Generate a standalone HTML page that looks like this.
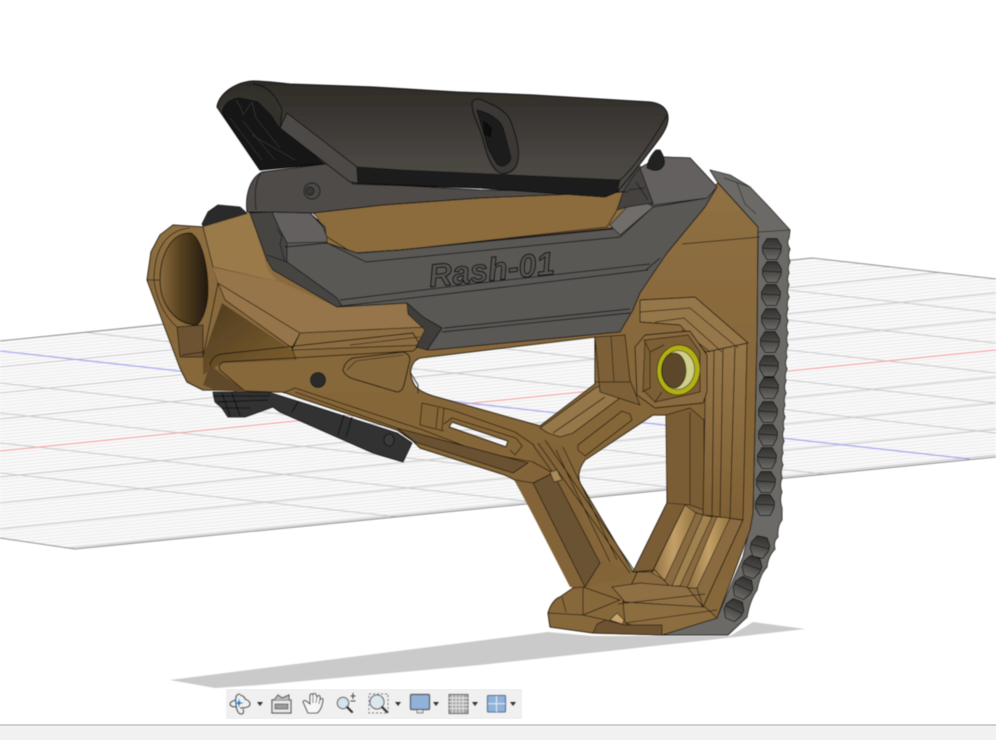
<!DOCTYPE html>
<html><head><meta charset="utf-8"><style>
html,body{margin:0;padding:0;background:#fff}
body{width:996px;height:740px;overflow:hidden;position:relative}
svg{position:absolute;left:0;top:0;display:block}
</style></head><body>
<svg width="996" height="740" viewBox="0 0 996 740" xmlns="http://www.w3.org/2000/svg">
<defs>
<pattern id="minor" width="40" height="3.2" patternUnits="userSpaceOnUse" patternTransform="rotate(-5.8)">
<rect width="40" height="3.2" fill="#fafafa"/><rect width="40" height="1" fill="#eaeaea"/>
</pattern>
<clipPath id="gc"><polygon points="0,341 812,258 996,279 996,457 75,549 0,538"/></clipPath>
<filter id="soft" x="-5%" y="-5%" width="110%" height="110%"><feGaussianBlur stdDeviation="0.5"/></filter>
<filter id="soft2" x="-5%" y="-5%" width="110%" height="110%"><feGaussianBlur stdDeviation="0.4"/></filter>
<linearGradient id="cheek" x1="0" y1="0" x2="0" y2="1"><stop offset="0" stop-color="#2e2b27"/><stop offset=".7" stop-color="#4a4641"/><stop offset="1" stop-color="#4e4a45"/></linearGradient>
<linearGradient id="tan" x1="0" y1="0" x2="0" y2="1"><stop offset="0" stop-color="#8f7043"/><stop offset=".5" stop-color="#856639"/><stop offset="1" stop-color="#86673b"/></linearGradient>
<linearGradient id="tanDark" x1="0" y1="0" x2="1" y2="1"><stop offset="0" stop-color="#4e3b20"/><stop offset="1" stop-color="#80612f"/></linearGradient>
<linearGradient id="bore" x1="0" y1="0" x2="1" y2="0"><stop offset="0" stop-color="#8a6b3e"/><stop offset=".45" stop-color="#54401f"/><stop offset="1" stop-color="#221a0e"/></linearGradient>
<linearGradient id="hexg" x1="0" y1="0" x2="0" y2="1"><stop offset="0" stop-color="#333230"/><stop offset=".5" stop-color="#4a4946"/><stop offset="1" stop-color="#6d6c68"/></linearGradient>
<linearGradient id="light" x1="0" y1="0" x2="1" y2="0"><stop offset="0" stop-color="#8d6e40"/><stop offset=".5" stop-color="#c4a068"/><stop offset="1" stop-color="#94743f"/></linearGradient>
<linearGradient id="vband" x1="0" y1="0" x2="0" y2="1"><stop offset="0" stop-color="#96774a"/><stop offset="1" stop-color="#7f6035"/></linearGradient>
<g id="hx"><path d="M-5,-10.5 L5,-10.5 L9.5,-3 L9,3 L5,10.5 L-5,10.5 L-9.5,3 L-9.5,-3 Z" fill="url(#hexg)" stroke="#141414" stroke-width=".9"/><path d="M-9.5,-1 L9.5,0" stroke="#111" stroke-width=".8"/></g>
</defs>

<!-- ground grid -->
<g filter="url(#soft2)">
<g clip-path="url(#gc)">
<rect x="0" y="250" width="996" height="310" fill="url(#minor)"/>
<g stroke="#c8c8c8" stroke-width="1" fill="none">
<path d="M0,367 L996,267M0,393 L996,293M0,419 L996,319M0,477 L996,377M0,503 L996,403M0,529 L996,429M0,555 L996,455"/>
<path d="M0,383 L996,493M0,413 L996,523M0,443 L996,553M0,473 L996,583M0,323 L996,433M0,293 L996,403M0,263 L996,373M0,233 L996,343M0,203 L996,313"/>
</g>
<path d="M0,451 L996,350" stroke="#f6a5a8" stroke-width="1.3" fill="none"/>
<path d="M0,351 L970,459" stroke="#a4a6f2" stroke-width="1.3" fill="none"/>
</g>
<path d="M0,341 L812,258 L996,279M996,457 L75,549 L0,538" stroke="#8c8c8c" stroke-width="1.1" fill="none"/>
</g>

<!-- shadow -->
<polygon points="170,680 548,632 593,636 730,636 753,622 805,629 700,641 480,665 260,685 215,688" fill="#cacaca" filter="url(#soft2)"/>

<g filter="url(#soft)" stroke-linejoin="round">
<!-- knob -->
<path d="M202,224 L208,212 L218,205 L240,207 L252,218 L205,230 Z" fill="#2b2b2b" stroke="#111" stroke-width=".8"/>

<!-- dark lever -->
<path d="M213,392 L268,392 L300,402 L397,433 L412,443 L403,462 L373,453 L280,412 L273,407 L245,417 L228,417 L222,408 L215,402 Z" fill="#303030" stroke="#111" stroke-width=".8"/>
<path d="M213,396 L270,396M217,402 L268,400M222,408 L250,408M298,402 L292,412M344,415 L338,435M352,417 L346,437M222,393 L230,416M232,393 L240,416" stroke="#0d0d0d" stroke-width=".9" fill="none"/>
<ellipse cx="389" cy="440" rx="5" ry="6" fill="#3a3a3a" stroke="#0f0f0f" stroke-width=".8"/>

<!-- butt strip -->
<path d="M710,170 L730,175 L750,187 L770,208 L790,230 L789,238 Q786,243 790,249 Q787,255 790,262 Q787,267 789,273 Q786,279 789,285 Q786,291 789,297 Q786,303 788,309 Q785,315 788,321 Q785,327 788,333 Q785,339 788,345 Q785,351 787,357 Q784,363 787,369 Q784,375 786,381 Q783,387 786,393 Q783,399 785,405 Q782,411 785,417 Q782,423 784,429 Q781,435 784,441 Q781,447 783,453 Q780,459 783,465 Q780,471 782,478 Q779,485 782,492 Q779,499 782,508 L782,520 Q777,526 778,537 Q773,541 775,549 Q768,556 767,567 Q760,574 757,590 Q750,600 747,617 L728,635 L662,635 L670,625 L717,618 L743,557 L753,513 L757,340 L758,227 L718,183 Z" fill="#6c6b66" stroke="#1e1e1c" stroke-width=".9"/>
<path d="M758,232 L790,230M724,178 L750,187M737,183 L745,204 L756,214" stroke="#2a2a28" stroke-width=".8" fill="none"/>

<!-- hexes -->
<use href="#hx" x="772" y="249"/><use href="#hx" x="772" y="272"/><use href="#hx" x="771" y="295"/><use href="#hx" x="771" y="319"/><use href="#hx" x="770" y="342"/><use href="#hx" x="769" y="366"/><use href="#hx" x="769" y="388"/><use href="#hx" x="768" y="412"/><use href="#hx" x="768" y="435"/><use href="#hx" x="767" y="458"/><use href="#hx" x="766" y="482"/><use href="#hx" x="765" y="505"/>
<g transform="translate(760,547) rotate(12)"><use href="#hx"/></g>
<g transform="translate(752,567) rotate(18)"><use href="#hx"/></g>
<g transform="translate(743,588) rotate(22)"><use href="#hx"/></g>
<g transform="translate(734,610) rotate(22)"><use href="#hx"/></g>

<!-- filler behind rail corner -->
<polygon points="590,192 640,165 660,205 610,232" fill="#4a4845"/>

<!-- main tan body with windows -->
<path fill-rule="evenodd" fill="url(#tan)" stroke="#1c150a" stroke-width="1" d="M147,280 L151,252 L160,235 L173,225 L203,227 L250,213 L268,215 L290,225 L700,200 L718,183 L758,227 L757,340 L753,513 L750,530 L717,618 L662,635 L593,633 L550,627 L548,613 Q552,600 560,597 L573,588 L515,480 L505,475 L420,448 L413,441 L397,430 L300,398 L283,392 L273,392 L213,390 L203,390 L187,382 L180,368 Z
M595,337 L595,384 L540,426 L433,396 Q420,392 415,386 Q408,374 412,366 Q414,360 420,358 Z
M668,415 L667,503 L633,572 L580,483 Q576,472 585,460 L653,415 Z
M449,427 L452,422 L508,441 L506,447 Z"/>

<!-- barrel -->
<path d="M160,280 C160,254 172,232 191,233 C203,240 208,270 208,290 C208,306 203,320 197,325 C176,325 160,305 160,280 Z" fill="url(#bore)" stroke="#1c150a" stroke-width="1"/>
<path d="M154,280 C154,250 166,230 190,228M154,280 C156,300 166,318 177,327M147,280 L160,280" stroke="#1c150a" stroke-width=".8" fill="none"/>
<path d="M177,327 L203,325 L203,357 L180,357 Z" fill="#6d5330" stroke="#1c150a" stroke-width=".8"/>
<path d="M182,355 L203,352" stroke="#1c150a" stroke-width=".7"/>
<path d="M203,227 L218,283 L203,357" stroke="#1c150a" stroke-width=".9" fill="none"/>
<path d="M203,227 L213,267 L278,282 L268,270 L250,213 Z" fill="#9a7a4a" stroke="none"/>
<path d="M213,267 L278,282 M203,227 L213,267" stroke="#1c150a" stroke-width=".8" fill="none"/>
<path d="M218,283 L300,333 L292,348 L225,300 Z" fill="#95754a" stroke="#1c150a" stroke-width=".8"/>
<path d="M222,303 L292,350 L296,360 L222,363 L203,375 L203,357 Z" fill="url(#tanDark)" stroke="none"/>
<path d="M213,267 L280,282 L337,307 L407,303 L423,317 L427,327 L300,333 L218,283 Z" fill="#95754a" stroke="none"/>
<path d="M300,333 L427,327 L425,345 L292,350 Z" fill="#8c6d42" stroke="#1c150a" stroke-width=".8"/>
<path d="M300,333 L292,348 L296,360M218,283 L300,333 M350,345 L420,337" stroke="#1c150a" stroke-width=".7" fill="none"/>

<!-- tan top recess -->
<path d="M313,213 L383,205 L480,198 L623,192 L617,210 L607,227 L400,250 L353,253 L327,237 L317,217 Z" fill="#8c6c3e" stroke="#1c150a" stroke-width=".8"/>

<!-- rear horizontal seam -->
<path d="M682,244 L760,237" stroke="#1c150a" stroke-width=".8" fill="none"/>

<!-- lower body channel -->
<path d="M210,365 C212,357 216,355 222,354 L413,333 L420,345 L413,351 L223,362 C220,364 218,366 220,370 L246,392" fill="none" stroke="#1c150a" stroke-width=".9"/>
<path d="M210,365 L222,386 L237,392" fill="none" stroke="#1c150a" stroke-width=".8"/>
<path d="M210,365 L246,392 L215,390 L203,385 Z" fill="#60492a" stroke="none"/>
<path d="M343,370 Q345,361 353,358 L403,352 Q410,354 410,360 L404,385 Q402,392 397,392 L357,380 Q345,377 343,370 Z" fill="#86683c" stroke="#1c150a" stroke-width="1"/>
<path d="M347,370 L356,361 L403,355" fill="none" stroke="#1c150a" stroke-width=".6"/>
<circle cx="318" cy="380" r="7.5" fill="#2a2a2a" stroke="#0f0f0f" stroke-width=".8"/>
<path d="M283,393 L295,388 L423,430 L480,452 L533,462 M295,392 L397,428" fill="none" stroke="#1c150a" stroke-width=".8"/>
<path d="M397,428 L528,463 L513,473 L415,442 Z" fill="#6a5130" stroke="#1c150a" stroke-width=".8"/>
<path d="M410,372 L418,385 L418,394 M422,403 L452,410 L515,432 L534,445 M422,403 L420,425 L444,431 M438,408 L436,428 M444,408 L442,430" fill="none" stroke="#1c150a" stroke-width=".8"/>
<path d="M444,424 L452,418 L516,438 L522,446 L515,455 L510,450" fill="none" stroke="#1c150a" stroke-width=".8"/>

<!-- strut Y + leg -->
<path d="M534,445 L545,440 L563,447 L595,555 L630,573 L615,580 L583,587 L570,587 L515,480 L533,462 Z" fill="#836439" stroke="none"/>
<path d="M533,483 L553,473 L600,563 L585,587 Z" fill="#6b5230" stroke="#1c150a" stroke-width=".8"/>
<path d="M515,480 L533,483 L553,473 L533,462 M553,473 L533,445 M538,443 L630,573 M545,440 L636,573 M563,447 L617,560 M556,450 L610,562" fill="none" stroke="#1c150a" stroke-width=".8"/>
<path d="M550,472 L557,470 L562,480 L554,482 Z" fill="#a98a58" stroke="#1c150a" stroke-width=".7"/>
<path d="M540,428 L595,388 L620,378 L620,398 L573,433 L560,437 L548,433 Z" fill="#96774a" stroke="#1c150a" stroke-width=".8"/>
<path d="M553,433 L605,397 M578,445 L622,411 L630,414 L632,420 L585,456 L578,450 Z" fill="none" stroke="#1c150a" stroke-width=".8"/>
<path d="M595,337 L625,335 L630,380 L640,405 L600,392 Z" fill="#7d6037" stroke="#1c150a" stroke-width=".8"/>
<path d="M611,336 L614,382 M595,382 L630,382" stroke="#1c150a" stroke-width=".7" fill="none"/>
<path d="M666,415 L690,408 L704,420 L704,510 L690,505 L667,503 Z" fill="#7a5d34" stroke="#1c150a" stroke-width=".8"/>
<path d="M690,412 L690,505" stroke="#1c150a" stroke-width=".7"/>

<!-- rear bands -->
<path d="M706,352 L747,343 L743,520 L703,515 Z" fill="url(#vband)" stroke="none"/>
<path d="M640,300 L695,297 L748,343 L706,352 L680,325 L640,322 Z" fill="#96774a" stroke="#1c150a" stroke-width=".9"/>
<path d="M640,312 L690,308 L738,348 M655,322 L684,318 L722,352 M682,330 L710,352" fill="none" stroke="#1c150a" stroke-width=".8"/>
<path d="M706,352 L703,515 M714,350 L712,517 M723,349 L720,518 M735,347 L730,519 M747,343 L743,520" stroke="#1c150a" stroke-width=".85" fill="none"/>
<!-- lower facets -->
<path d="M667,503 L703,515 L743,520 L703,607 L623,602 L636,575 Z" fill="#8a6b3f" stroke="#1c150a" stroke-width=".9"/>
<path d="M717,517 L730,518 L697,588 L687,588 Z" fill="url(#light)" stroke="#1c150a" stroke-width=".7"/>
<path d="M703,515 L712,517 L680,586 L672,586 Z" fill="#a08250" stroke="#1c150a" stroke-width=".7"/>
<path d="M685,505 L696,513 L665,580 L652,573 Z" fill="url(#light)" stroke="#1c150a" stroke-width=".7"/>
<path d="M667,503 L633,572 L652,572 L685,505" fill="#7a5c34" stroke="#1c150a" stroke-width=".8"/>
<path d="M633,572 L655,570 L670,587 L687,588 L697,588 L703,607" fill="none" stroke="#1c150a" stroke-width=".8"/>
<!-- foot -->
<path d="M612,587 L640,583 L687,587 L703,607 L625,602 Z" fill="#8f7044" stroke="#1c150a" stroke-width=".8"/>
<path d="M623,602 L705,607 L717,618 L662,635 L625,623 Z" fill="#8c6d41" stroke="#1c150a" stroke-width=".8"/>
<path d="M625,623 L717,610 M618,604 L705,594" stroke="#1c150a" stroke-width=".7" fill="none"/>
<path d="M617,613 L624,620 L622,624 L610,620 Z" fill="#c9a56c" stroke="#1c150a" stroke-width=".7"/>
<path d="M593,633 L597,624 L606,620 L625,625 L662,625 L662,635 Z" fill="#6d5330" stroke="#1c150a" stroke-width=".7"/>
<path d="M573,588 L583,587 L620,600 L583,615 L548,613" fill="none" stroke="#1c150a" stroke-width=".8"/>
<path d="M583,587 L583,615 L606,620 M562,597 L566,612" fill="none" stroke="#1c150a" stroke-width=".7"/>

<!-- boss with yellow ring -->
<path d="M635,347 L645,335 L690,331 L707,355 L707,392 L703,403 L655,408 L637,395 Z" fill="#8a6b3f" stroke="#1c150a" stroke-width=".9"/>
<path d="M645,340 L688,335 L700,352 L700,392 L655,402 L643,390 Z" fill="#7c5e36" stroke="#1c150a" stroke-width=".7"/>
<path d="M644,340 L650,352 L650,388 L642,392 M650,352 L664,345 M655,402 L662,392" fill="none" stroke="#1c150a" stroke-width=".7"/>
<ellipse cx="678.500" cy="370" rx="21.500" ry="25" transform="rotate(6 678.500 370)" fill="#b3b013" stroke="#4a4a05" stroke-width="1"/>
<ellipse cx="678" cy="370" rx="16.500" ry="19.500" transform="rotate(6 678 370)" fill="#cfcf8a" stroke="#4a4a05" stroke-width=".8"/>
<path d="M674,353 C666,353 662,362 662,371 C662,381 668,388 676,388 C681,386 686,380 686,371 C686,362 682,353 674,353 Z" fill="#5b472a" stroke="#2a2208" stroke-width=".7"/>

<!-- grey rail -->
<path d="M270,212 L310,213 L325,227 L327,243 L357,253 L400,250 L613,228 L653,203 L640,168 L660,157 L690,158 L717,187 L705,207 L667,253 L640,293 L633,310 L620,332 L432,350 L427,350 L442,328 L423,317 L407,303 L337,307 L273,270 L267,260 L250,213 Z" fill="#5a5855" stroke="#17171a" stroke-width="1"/>
<path d="M272,212 L310,213 L323,227 L327,237 L327,242 L287,243 L280,230 Z" fill="#63615e" stroke="#17171a" stroke-width=".8"/>
<path d="M250,213 L272,212 L280,230 L287,243 L287,262 L337,298 L342,306 L337,307 L273,270 L267,260 Z" fill="#474543" stroke="#17171a" stroke-width=".8"/>
<path d="M277,229 L282,236 L280,244 L285,262 M267,255 L287,262" fill="none" stroke="#17171a" stroke-width=".7"/>
<path d="M285,247 L327,243 L366,262 L620,237 L653,207 L707,198 M357,253 L400,250 L613,229" fill="none" stroke="#17171a" stroke-width=".9"/>
<path d="M610,225 L627,207 L647,203 L653,207 L620,235 Z" fill="#6f6d6a" stroke="#17171a" stroke-width=".7"/>
<path d="M640,168 L660,157 L690,158 L717,187 L707,198 L653,205 Z" fill="#63615e" stroke="#17171a" stroke-width=".8"/>
<path d="M623,192 L632,178 L640,168 L653,203 L627,207 L617,210 Z" fill="#44423f" stroke="#17171a" stroke-width=".8"/>
<path d="M628,190 L645,188 M636,182 L648,200" stroke="#17171a" stroke-width=".7" fill="none"/>
<path d="M340,300 L480,283 L650,264 M342,306 L480,290 L648,270 M442,332 L630,313 M444,328 L630,309 M646,270 L660,258" fill="none" stroke="#17171a" stroke-width=".9"/>
<path d="M407,303 L423,317 L442,328 L427,350 L416,347 L425,330 L408,314 Z" fill="#3f3d3b" stroke="#17171a" stroke-width=".8"/>

<text x="430" y="287" transform="rotate(-6 430 287)" font-family="'Liberation Sans',sans-serif" font-size="32" font-weight="700" font-style="italic" textLength="126" lengthAdjust="spacing" fill="#55534f" stroke="#0e0e0e" stroke-width="1.100">Rash-01</text>

<!-- lever plate behind cheek -->
<path d="M247,212 C245,195 250,178 262,172 L333,163 L357,183 L480,190 L627,192 L623,192 L480,198 L383,205 L313,213 L270,212 Z" fill="#4f4c49" stroke="#111" stroke-width=".9"/>
<path d="M262,172 C256,178 254,190 256,210" fill="none" stroke="#111" stroke-width=".8"/>
<circle cx="312" cy="191" r="8" fill="#4c4946" stroke="#111" stroke-width=".9"/>
<circle cx="310" cy="191" r="4" fill="#3a3835" stroke="#111" stroke-width=".8"/>

<!-- peg -->
<path d="M647,168 Q648,158 656,150 L660,150 Q666,160 664,165 Q660,172 652,170 Z" fill="#242424" stroke="#0f0f0f" stroke-width=".8"/>

<!-- cheek piece -->
<path d="M217,107 C219,94 235,82 253,81 C265,81 280,83 290,84 L373,87 L457,92 L533,95 L650,102 C660,103 668,108 668,118 C668,128 660,138 653,147 L633,173 L617,192 L605,197 L480,188 L353,184 L333,163 L260,170 Z" fill="url(#cheek)" stroke="#0e0e0e" stroke-width="1.100"/>
<path d="M222,112 C224,103 232,98 240,98 L258,102 L283,127 L323,163 L260,170 L228,122 Z" fill="#151515" stroke="#0a0a0a" stroke-width=".8"/>
<path d="M236,100 L241,108 L243,115 L252,102 L256,118 L280,148 M230,118 L262,160 M242,120 L275,160 M252,135 L295,160" fill="none" stroke="#333" stroke-width=".8"/>
<path d="M240,90 C255,85 268,90 276,105 L283,117 L280,128 L264,104 C258,96 248,94 240,98 Z" fill="#33302c" stroke="none"/>
<path d="M287,113 L357,167 L358,183 L350,182 L280,128 Z" fill="#4d4a46" stroke="#0e0e0e" stroke-width=".9"/>
<path d="M253,84 C268,85 276,96 282,110 L280,128" fill="none" stroke="#0e0e0e" stroke-width=".9"/>
<path d="M357,167 L400,170 L620,180 L617,192 L605,197 L480,188 L358,183 Z" fill="#1e1e1e" stroke="#0e0e0e" stroke-width=".8"/>
<path d="M620,180 C632,170 650,145 667,115" fill="none" stroke="#0e0e0e" stroke-width=".9"/>
<path d="M472,103 C473,98 480,98 484,101 C497,106 508,113 511,122 C516,135 520,150 518,160 C516,172 505,176 498,172 C490,166 486,152 483,140 C480,128 472,115 472,103 Z" fill="#3a3734" stroke="#0c0c0c" stroke-width="1"/>
<path d="M477,110 C490,113 500,120 503,128 L511,158 C508,166 502,168 497,164 L488,148 Z" fill="#1f1e1c" stroke="#0c0c0c" stroke-width=".8"/>
<path d="M483,120 L492,127 L491,138 L484,134 Z" fill="#0e0e0e"/>
</g>

<!-- toolbar -->
<rect x="226" y="689" width="296" height="30" fill="#f0f0f0"/>
<rect x="0" y="724" width="996" height="2" fill="#cfcfcf"/>
<rect x="0" y="726" width="996" height="14" fill="#f1f1f1"/>

<g filter="url(#soft2)">
<!-- orbit -->
<path d="M240,694 C236,694 235,698 236,703 C236,709 238,714 241,714 C244,714 244,711 243,709 M236,700 C232,701 230,702 230,704 C230,706 233,707 236,707 M240,695 C244,696 245,698 245,699 C248,700 250,702 250,704 C250,707 245,708 240,708" fill="none" stroke="#555" stroke-width="1.100"/>
<circle cx="239" cy="703" r="1.700" fill="#2a7fd6"/>
<path d="M235,703 L243,703 M239,699 L239,707" stroke="#2a7fd6" stroke-width=".7"/>
<path d="M257,702 L263,702 L260,706 Z" fill="#333"/>
<!-- capture -->
<rect x="272" y="700" width="19" height="13" fill="#e9e9e9" stroke="#555" stroke-width="1.200"/>
<rect x="275" y="704" width="13" height="5" fill="#9a9a9a" stroke="#555" stroke-width=".8"/>
<path d="M274,700 L278,695 L282,698 L289,695 L289,700" fill="#bbb" stroke="#555" stroke-width="1"/>
<!-- hand -->
<path d="M308,713 L317,713 C320,711 322,707 323,700 C323,698 321,698 320,700 L320,697 C320,695 318,695 317,697 L316,695 C316,693 313,693 313,695 C312,693 310,694 310,696 L310,704 L306,701 C304,700 302,701 304,704 Z" fill="#f7f7f7" stroke="#555" stroke-width="1.100"/>
<path d="M313,695 L313,703 M317,696 L316,703 M320,699 L319,704" stroke="#555" stroke-width=".8"/>
<!-- zoom -->
<circle cx="343" cy="703" r="5.700" fill="#d5e4ec" stroke="#666" stroke-width="1.100"/>
<path d="M347,707 L352,712" stroke="#333" stroke-width="2.200" stroke-linecap="round"/>
<path d="M353,693 L353,699 M350.500,696 L355.500,696 M350.500,701 L355.500,701" stroke="#444" stroke-width="1"/>
<!-- fit -->
<rect x="369" y="694" width="19" height="19" fill="none" stroke="#777" stroke-width="1" stroke-dasharray="2 2"/>
<circle cx="377" cy="702" r="7" fill="#dbe8ee" stroke="#666" stroke-width="1.100"/>
<path d="M382,707 L387,712" stroke="#333" stroke-width="2.200" stroke-linecap="round"/>
<path d="M395,702 L401,702 L398,706 Z" fill="#333"/>
<!-- monitor -->
<rect x="410.500" y="694.500" width="19" height="15" rx="1" fill="#90b1d8" stroke="#555" stroke-width="1.200"/>
<path d="M417,710 L417,713 L423,713 L423,710" fill="#ddd" stroke="#666" stroke-width=".8"/>
<path d="M433,702 L439,702 L436,706 Z" fill="#333"/>
<!-- grid -->
<rect x="449" y="694.500" width="19" height="19" fill="#a8a8a8" stroke="#666" stroke-width="1"/>
<path d="M452.500,695 V713 M456,695 V713 M459.500,695 V713 M463,695 V713 M449,698 H468 M449,701.500 H468 M449,705 H468 M449,708.500 H468" stroke="#e4e4e4" stroke-width=".9"/>
<path d="M472,702 L478,702 L475,706 Z" fill="#333"/>
<!-- viewports -->
<rect x="487.500" y="695.500" width="18" height="16.500" rx="1" fill="#90b1d8" stroke="#4d6a94" stroke-width="1.100"/>
<path d="M496.500,696 V712 M488,703.700 H505" stroke="#dce7f3" stroke-width="1.200"/>
<path d="M510,702 L516,702 L513,706 Z" fill="#333"/>
</g>
</svg>
</body></html>
